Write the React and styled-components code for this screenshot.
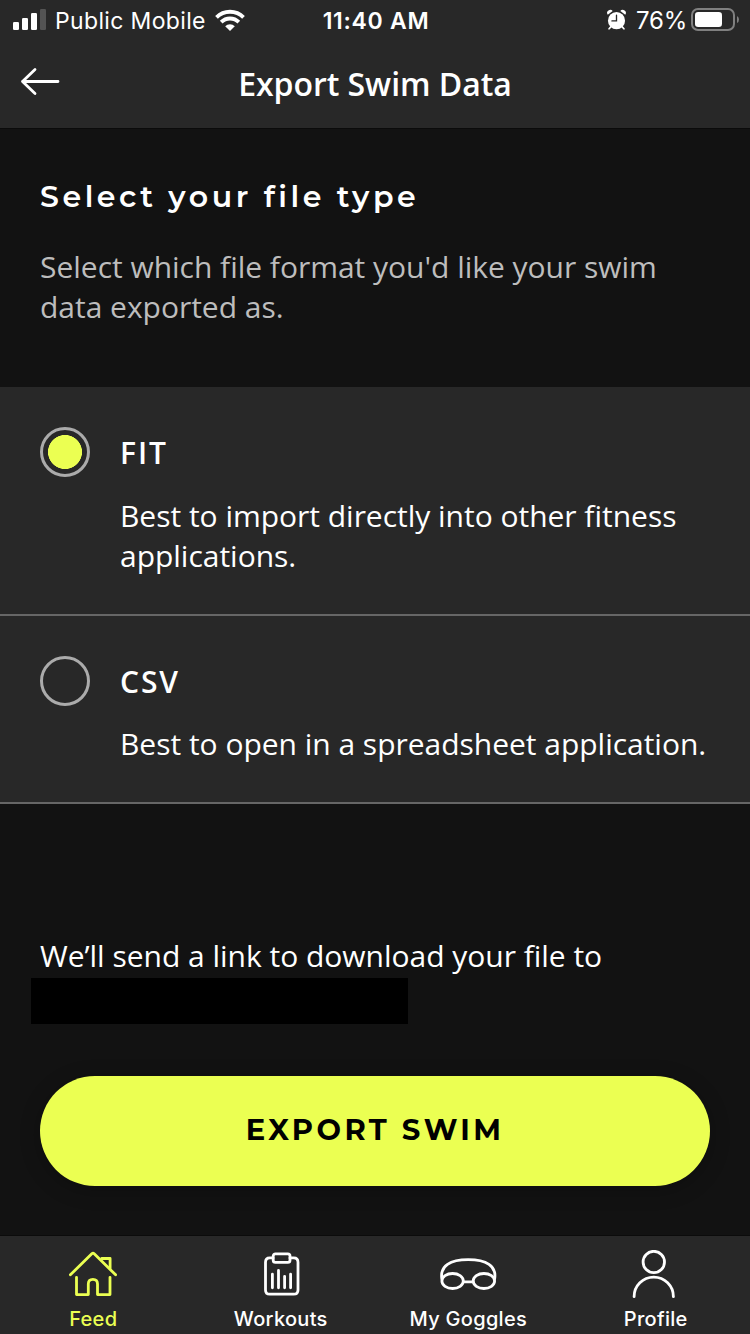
import React, { useState } from "react";
import styled, { createGlobalStyle } from "styled-components";

const lime = "#ebff52";
const panel = "#282828";
const openSans = '"Open Sans", "Noto Sans", sans-serif';
const inter = 'Inter, "Liberation Sans", sans-serif';

const GlobalStyle = createGlobalStyle`
  *, *::before, *::after { box-sizing: border-box; }
  body { margin: 0; background: #121212; }
  button { font: inherit; border: 0; padding: 0; background: none; color: inherit; }
  h1, h2, p { margin: 0; }
  svg { display: block; flex: none; }
`;

const Screen = styled.div`
  display: flex;
  flex-direction: column;
  width: 750px;
  height: 1334px;
  overflow: hidden;
  background: #121212;
  color: #fff;
  font: 400 30px/40px ${openSans};
  letter-spacing: -0.02px;
`;

const Header = styled.header`
  flex: none;
  height: 129px;
  background: ${panel};
  border-bottom: 1px solid #0b0b0b;
`;

const StatusBar = styled.div`
  display: grid;
  grid-template-columns: 1fr auto 1fr;
  align-items: center;
  height: 40px;
  padding: 0 11px 0 13px;
  font: 400 23px/38px ${inter};
`;

const StatusGroup = styled.div`
  display: flex;
  align-items: center;
  justify-content: ${(p) => (p.$end ? "flex-end" : "flex-start")};
  height: 40px;
`;

const Carrier = styled.span`
  margin: 2px 9px 0 8px;
  letter-spacing: 0.35px;
`;

const Time = styled.span`
  margin-top: 2px;
  font-weight: 600;
  letter-spacing: 0.7px;
`;

const Percent = styled.span`
  margin: 2px 4px 0 10px;
  font-size: 24px;
  letter-spacing: -0.2px;
`;

const NavBar = styled.div`
  display: grid;
  grid-template-columns: 60px 1fr 60px;
  height: 88px;
`;

const BackButton = styled.button`
  padding: 27px 0 0 20px;
  align-self: start;
`;

const Title = styled.h1`
  font: 600 32px/44px ${openSans};
  padding-top: 22px;
  text-align: center;
  letter-spacing: -0.05px;
`;

const Intro = styled.section`
  flex: none;
  height: 258px;
  padding: 48px 40px 0;
`;

const Heading = styled.h2`
  font: 600 30px/40px Montserrat, ${inter};
  letter-spacing: 3.55px;
  white-space: nowrap;
`;

const Description = styled.p`
  margin-top: 30px;
  color: #bdbdbd;
`;

const Option = styled.label`
  display: flex;
  flex: none;
  gap: 30px;
  height: ${(p) => p.$height}px;
  padding: 40px 40px 0;
  background: ${panel};
  border-bottom: 2px solid #666;
`;

const Radio = styled.input`
  appearance: none;
  flex: none;
  width: 50px;
  height: 50px;
  margin: 0;
  border: 3px solid #ababab;
  border-radius: 50%;
  background: ${(p) => (p.checked ? `radial-gradient(circle, ${lime} 16.7px, transparent 17.3px)` : "none")};
`;

const OptionBody = styled.div`
  padding-top: 6px;
  white-space: nowrap;
`;

const OptionName = styled.div`
  margin-bottom: ${(p) => p.$gap}px;
  font-weight: 600;
  letter-spacing: 1.9px;
`;

const Footer = styled.section`
  flex: 1;
  padding: 132px 40px 0;
`;

const HiddenEmail = styled.div`
  width: 377px;
  height: 46px;
  margin: 2px 0 52px -9px;
  background: #000;
`;

const ExportButton = styled.button`
  width: 670px;
  height: 110px;
  padding-bottom: 2px;
  border-radius: 55px;
  background: ${lime};
  color: #000;
  font: 700 29px/108px Montserrat, ${inter};
  letter-spacing: 3.4px;
  box-shadow: 0 4px 20px rgba(0, 0, 0, 0.25);
`;

const TabBar = styled.nav`
  display: grid;
  grid-template-columns: repeat(4, 1fr);
  flex: none;
  height: 98px;
  background: ${panel};
  box-shadow: 0 -1px 0 #0b0b0b;
`;

const Tab = styled.button`
  display: flex;
  flex-direction: column;
  align-items: center;
  padding-top: 14px;
  color: ${(p) => (p.$active ? lime : "#fff")};
  font: 500 20px/24px ${inter};
  letter-spacing: 0.3px;
  white-space: nowrap;
`;

const TabLabel = styled.span`
  margin: 7px 1px 0 0;
`;

const Signal = () => (
  <svg width="34" height="22" fill="#fff">
    <rect x="0" y="13" width="6" height="8" rx="1.3" />
    <rect x="9" y="9" width="6" height="12" rx="1.3" />
    <rect x="18" y="4" width="6" height="17" rx="1.3" />
    <rect x="27" y="0" width="6" height="21" rx="1.3" fill="#545454" />
  </svg>
);

const Wifi = () => (
  <svg width="30" height="22" viewBox="0 0 30 22" fill="none" stroke="#fff" strokeWidth="3.8">
    <path d="M1.5 8.4A19 19 0 0 1 28.5 8.4" />
    <path d="M6.2 13.2A12.3 12.3 0 0 1 23.8 13.2" />
    <path d="M15 22L10.2 17.2A6.8 6.8 0 0 1 19.8 17.2Z" fill="#fff" stroke="none" />
  </svg>
);

const Alarm = () => (
  <svg width="19" height="22" viewBox="0 0 20 22">
    <g fill="#fff">
      <circle cx="10" cy="11.7" r="9" />
      <path d="M0.8 5.4A3.2 3.2 0 0 1 6 1.6Z" />
      <path d="M19.2 5.4A3.2 3.2 0 0 0 14 1.6Z" />
    </g>
    <path d="M4 18.2L2.2 20.2M16 18.2L17.8 20.2" stroke="#fff" strokeWidth="1.8" strokeLinecap="round" />
    <path d="M10 6V12H5.2" fill="none" stroke={panel} strokeWidth="1.4" strokeLinecap="round" />
  </svg>
);

const Battery = () => (
  <svg width="48" height="24" viewBox="0 0 48 24">
    <rect x="1" y="1" width="42" height="21" rx="6" fill="none" stroke="#808080" strokeWidth="2" />
    <rect x="4" y="4" width="27" height="15" rx="3.2" fill="#fff" />
    <path d="M46 8Q48 9 48 11.5Q48 14 46 15Z" fill="#808080" />
  </svg>
);

const Back = () => (
  <svg width="40" height="30" viewBox="0 0 40 30" fill="none" stroke="#fff" strokeWidth="2.8" strokeLinecap="round" strokeLinejoin="round">
    <path d="M38 14.5H2.5M15 2.5L2.5 14.5L15 26.5" />
  </svg>
);

const TabIcon = ({ children }) => (
  <svg width="60" height="50" viewBox="0 0 60 50" fill="none" stroke="currentColor" strokeWidth="2.8" strokeLinecap="round" strokeLinejoin="round">
    {children}
  </svg>
);

const tabs = [
  {
    label: "Feed",
    icon: (
      <>
        <path d="M6.4 24.8L27.8 3.8Q29 2.7 30.2 3.8L51.6 24.8" />
        <path d="M12.5 27.3V44.6H24.3V34Q24.3 29.3 28.9 29.3Q33.5 29.3 33.5 34V44.6H46V27.3" />
        <path d="M37.8 8.5H46.1V18.3" />
      </>
    ),
  },
  {
    label: "Workouts",
    icon: (
      <>
        <path d="M22 7.9H18.8Q14.5 7.9 14.5 12.2V39.9Q14.5 44.2 18.8 44.2H42.7Q47 44.2 47 39.9V12.2Q47 7.9 42.7 7.9H39" />
        <rect x="22.2" y="3.8" width="16.8" height="8.6" rx="2.2" />
        <path d="M21.4 24.2V37.8M27.5 20.5V37.8M33.6 26.3V37.8M39.6 24.2V37.8" />
      </>
    ),
  },
  {
    label: "My Goggles",
    icon: (
      <>
        <path d="M2.8 28.5C1 16 11 9.7 29.2 9.7S57.6 16 55.7 28.5" />
        <ellipse cx="13.6" cy="31" rx="10.7" ry="7.5" />
        <ellipse cx="44.9" cy="31" rx="10.7" ry="7.5" />
        <path d="M24.4 31.8H34.1" />
      </>
    ),
  },
  {
    label: "Profile",
    icon: (
      <>
        <circle cx="27.8" cy="12" r="10.7" />
        <path d="M8.1 46.7A19.65 19.65 0 0 1 47.4 46.7" />
      </>
    ),
  },
];

const options = [
  { name: "FIT", height: 229, gap: 23, text: ["Best to import directly into other fitness", "applications."] },
  { name: "CSV", height: 188, gap: 22, text: ["Best to open in a spreadsheet application."] },
];

export default function App() {
  const [type, setType] = useState("FIT");
  return (
    <>
      <GlobalStyle />
      <Screen>
        <Header>
          <StatusBar>
            <StatusGroup>
              <Signal />
              <Carrier>Public Mobile</Carrier>
              <Wifi />
            </StatusGroup>
            <Time>11:40 AM</Time>
            <StatusGroup $end>
              <Alarm />
              <Percent>76%</Percent>
              <Battery />
            </StatusGroup>
          </StatusBar>
          <NavBar>
            <BackButton aria-label="Back">
              <Back />
            </BackButton>
            <Title>Export Swim Data</Title>
          </NavBar>
        </Header>
        <Intro>
          <Heading>Select your file type</Heading>
          <Description>
            Select which file format you'd like your swim
            <br />
            data exported as.
          </Description>
        </Intro>
        {options.map((o) => (
          <Option key={o.name} $height={o.height}>
            <Radio type="radio" name="type" checked={type === o.name} onChange={() => setType(o.name)} />
            <OptionBody>
              <OptionName $gap={o.gap}>{o.name}</OptionName>
              {o.text.map((line) => (
                <p key={line}>{line}</p>
              ))}
            </OptionBody>
          </Option>
        ))}
        <Footer>
          <p>We’ll send a link to download your file to</p>
          <HiddenEmail />
          <ExportButton>EXPORT SWIM</ExportButton>
        </Footer>
        <TabBar>
          {tabs.map((t, i) => (
            <Tab key={t.label} $active={i === 0}>
              <TabIcon>{t.icon}</TabIcon>
              <TabLabel>{t.label}</TabLabel>
            </Tab>
          ))}
        </TabBar>
      </Screen>
    </>
  );
}
